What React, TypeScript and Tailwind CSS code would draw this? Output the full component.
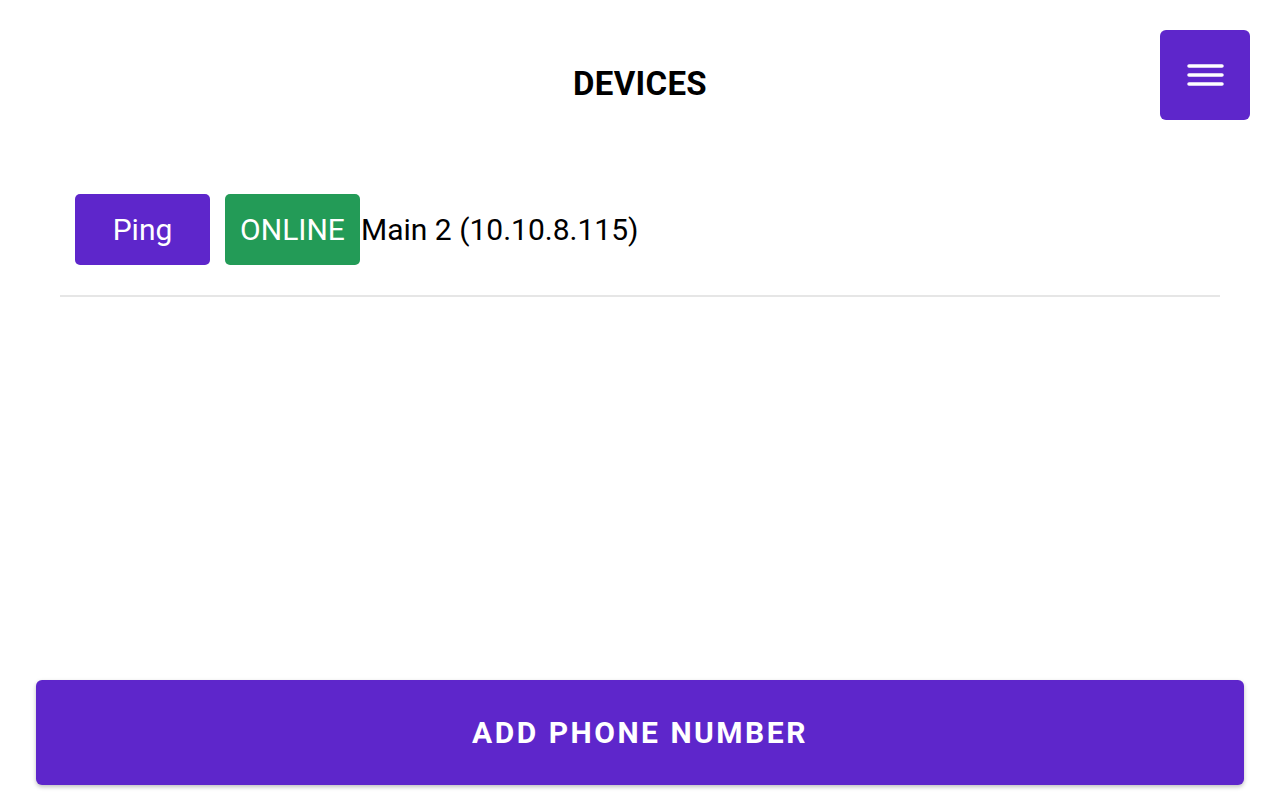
import React from 'react';

const devices = [{ id: 1, name: 'Main 2', ip: '10.10.8.115', online: true }];

const App: React.FC = () => {
  return (
    <div
      className="h-[800px] w-full bg-white flex flex-col overflow-hidden"
      style={{ fontFamily: 'Roboto, "Liberation Sans", sans-serif' }}
    >
      {/* Header */}
      <div className="grid grid-cols-[90px_1fr_90px] px-[30px] pt-[30px]">
        <div />
        <h1 className="text-center text-[33px] font-bold leading-[38px] tracking-[0.3px] text-black m-0 pt-[35px]">
          DEVICES
        </h1>
        <button className="w-[90px] h-[90px] rounded-[6px] bg-[#5e26cb] flex items-center justify-center border-0 cursor-pointer">
          <svg width="37" height="24" viewBox="0 0 37 24" fill="none" aria-hidden="true">
            <path d="M2 3h33M2 12h33M2 21h33" stroke="#fff" strokeWidth="3.5" strokeLinecap="round" />
          </svg>
        </button>
      </div>

      {/* Device list */}
      <div className="mx-[60px] mt-[74px] flex flex-col">
        {devices.map((d) => (
          <div key={d.id} className="flex items-center pl-[15px] pb-[30px] border-b-2 border-[#e6e6e6]">
            <button className="w-[135px] h-[71px] rounded-[5px] bg-[#5e26cb] text-white text-[30px] leading-none border-0">
              Ping
            </button>
            <div className="ml-[15px] w-[135px] h-[71px] rounded-[5px] bg-[#239b57] text-white text-[30px] flex items-center justify-center">
              {d.online ? 'ONLINE' : 'OFFLINE'}
            </div>
            <span className="text-[30px] text-black ml-[1px]">
              {d.name} ({d.ip})
            </span>
          </div>
        ))}
      </div>

      {/* Bottom action */}
      <div className="mt-auto px-[36px] pb-[15px]">
        <button className="w-full h-[105px] rounded-[6px] bg-[#5e26cb] text-white text-[30px] font-bold tracking-[2.5px] shadow-[0_2px_4px_rgba(0,0,0,0.25)] border-0">
          ADD PHONE NUMBER
        </button>
      </div>
    </div>
  );
};

export default App;
